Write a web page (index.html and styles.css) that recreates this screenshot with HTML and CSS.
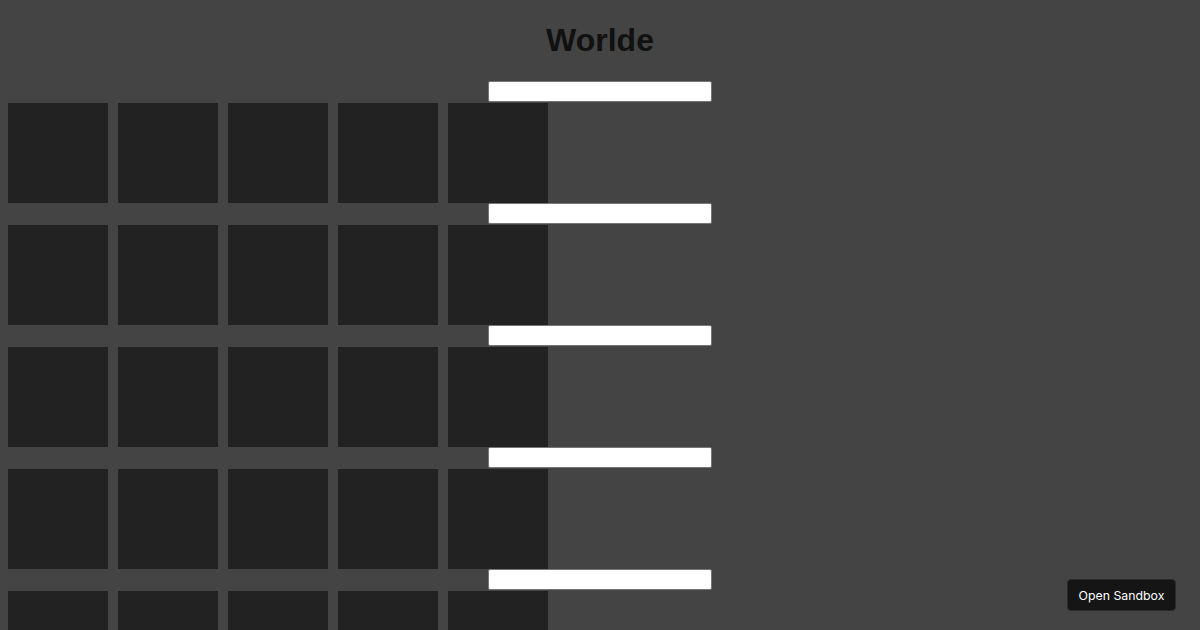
FILE: index.html
```html
<!DOCTYPE html>
<html lang="en">
<head>
<meta charset="utf-8">
<title>Worlde</title>
<link rel="stylesheet" href="styles.css">
</head>
<body>
<h1 class="title">Worlde</h1>
<div class="board">
  <div class="row"><input class="guess" type="text"><div class="tiles"><div class="tile"></div><div class="tile"></div><div class="tile"></div><div class="tile"></div><div class="tile"></div></div></div>
  <div class="row"><input class="guess" type="text"><div class="tiles"><div class="tile"></div><div class="tile"></div><div class="tile"></div><div class="tile"></div><div class="tile"></div></div></div>
  <div class="row"><input class="guess" type="text"><div class="tiles"><div class="tile"></div><div class="tile"></div><div class="tile"></div><div class="tile"></div><div class="tile"></div></div></div>
  <div class="row"><input class="guess" type="text"><div class="tiles"><div class="tile"></div><div class="tile"></div><div class="tile"></div><div class="tile"></div><div class="tile"></div></div></div>
  <div class="row"><input class="guess" type="text"><div class="tiles"><div class="tile"></div><div class="tile"></div><div class="tile"></div><div class="tile"></div><div class="tile"></div></div></div>
  <div class="row"><input class="guess" type="text"><div class="tiles"><div class="tile"></div><div class="tile"></div><div class="tile"></div><div class="tile"></div><div class="tile"></div></div></div>
</div>
<a class="sandbox-btn" href="#">Open Sandbox</a>
</body>
</html>
```
FILE: styles.css
```css
html, body {
  background: #444444;
}
body {
  margin: 8px;
  font-family: "Liberation Sans", Arial, sans-serif;
}
.title {
  margin: 14.44px 0 20.44px;
  font-size: 32px;
  line-height: 37px;
  font-weight: bold;
  text-align: center;
  color: #111111;
}
.board {
  padding-top: 1px;
  display: flex;
  flex-direction: column;
}
.row {
  display: flex;
  flex-direction: column;
}
.guess {
  display: block;
  box-sizing: border-box;
  width: 224px;
  height: 21px;
  margin: 0 auto 1px;
  padding: 1px 2px;
  border: 1px solid #767676;
  border-radius: 2px;
  background: #ffffff;
  font-family: "Liberation Sans", Arial, sans-serif;
  font-size: 13.33px;
  outline: none;
}
.tiles {
  display: flex;
  gap: 10px;
}
.tile {
  width: 100px;
  height: 100px;
  flex: none;
  background: #222222;
}
.sandbox-btn {
  position: fixed;
  right: 24px;
  bottom: 19px;
  box-sizing: border-box;
  width: 109px;
  height: 32px;
  display: flex;
  align-items: center;
  justify-content: center;
  background: #151515;
  border: 1px solid #2a2a2a;
  border-radius: 4px;
  color: #ffffff;
  font-family: Inter, "Liberation Sans", sans-serif;
  font-size: 12.3px;
  text-decoration: none;
}
```
